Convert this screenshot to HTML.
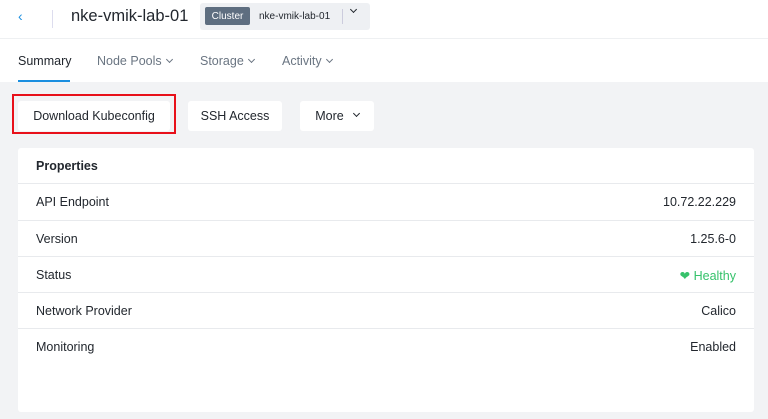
<html><head><style>
body{margin:0;width:768px;height:419px;background:#f2f3f5;font-family:"Liberation Sans",sans-serif;position:relative;overflow:hidden;color:#22272e}
.a{position:absolute}
.btn{position:absolute;background:#fff;border-radius:3px;font-size:12.5px;display:flex;align-items:center;justify-content:center;top:101px;height:30px}
.row{position:absolute;left:18px;width:736px;font-size:12.5px}
.row span{position:absolute;left:18px}
.row b{position:absolute;right:18px;font-weight:normal}
.ln{position:absolute;left:18px;width:736px;height:1px;background:#e8eaed}
.ch{display:inline-block;width:4px;height:4px;border-right:1.2px solid currentColor;border-bottom:1.2px solid currentColor;transform:rotate(45deg);margin-left:5px;position:relative;top:-3px}
</style></head><body>
<div class="a" style="left:0;top:0;width:768px;height:82px;background:#fff"></div>
<div class="a" style="left:0;top:38px;width:768px;height:1px;background:#eef0f2"></div>
<div class="a" style="left:18px;top:8px;color:#1b8fe0;font-size:14px">‹</div>
<div class="a" style="left:52px;top:10px;width:1px;height:18px;background:#dde"></div>
<div class="a" style="left:71px;top:7px;font-size:16.5px">nke-vmik-lab-01</div>
<div class="a" style="left:200px;top:3px;width:170px;height:27px;background:#eef0f3;border-radius:3px"></div>
<div class="a" style="left:205px;top:7px;width:45px;height:18px;background:#5e6e80;color:#fff;font-size:10px;line-height:19px;text-align:center;border-radius:2px">Cluster</div>
<div class="a" style="left:259px;top:11px;font-size:10px">nke-vmik-lab-01</div>
<div class="a" style="left:342px;top:9px;width:1px;height:15px;background:#ccd"></div>
<div class="a" style="left:351px;top:10px;font-size:9px"><span class="ch" style="margin:0"></span></div>
<div class="a" style="left:18px;top:54px;font-size:12.5px">Summary</div>
<div class="a" style="left:18px;top:80px;width:52px;height:2px;background:#1b8fe0"></div>
<div class="a" style="left:97px;top:54px;font-size:12.5px;color:#6a7582">Node Pools<span class="ch"></span></div>
<div class="a" style="left:200px;top:54px;font-size:12.5px;color:#6a7582">Storage<span class="ch"></span></div>
<div class="a" style="left:282px;top:54px;font-size:12.5px;color:#6a7582">Activity<span class="ch"></span></div>
<div class="a" style="left:12px;top:94px;width:160px;height:36px;border:2px solid #e8101a"></div>
<div class="btn" style="left:18px;width:152px">Download Kubeconfig</div>
<div class="btn" style="left:188px;width:94px">SSH Access</div>
<div class="btn" style="left:300px;width:74px">More<span class="ch" style="margin-left:10px"></span></div>
<div class="a" style="left:18px;top:148px;width:736px;height:264px;background:#fff;border-radius:3px"></div>
<div class="row" style="top:159px;font-weight:bold"><span>Properties</span></div>
<div class="ln" style="top:183px"></div>
<div class="row" style="top:195px"><span>API Endpoint</span><b>10.72.22.229</b></div>
<div class="ln" style="top:220px"></div>
<div class="row" style="top:232px"><span>Version</span><b>1.25.6-0</b></div>
<div class="ln" style="top:256px"></div>
<div class="row" style="top:268px"><span>Status</span><b style="color:#36c26b">&#10084; Healthy</b></div>
<div class="ln" style="top:292px"></div>
<div class="row" style="top:304px"><span>Network Provider</span><b>Calico</b></div>
<div class="ln" style="top:328px"></div>
<div class="row" style="top:340px"><span>Monitoring</span><b>Enabled</b></div>
</body></html>
